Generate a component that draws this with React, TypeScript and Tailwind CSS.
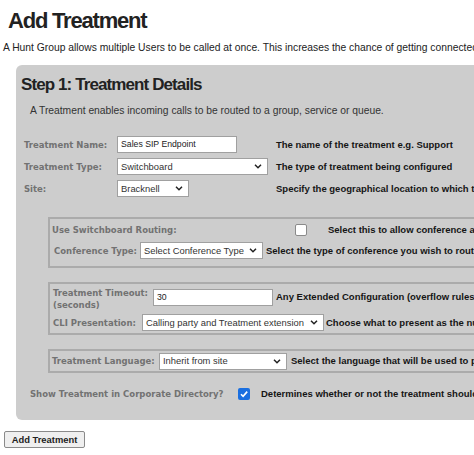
import React from "react";

const arial = { fontFamily: '"Liberation Sans", Arial, sans-serif' };
const verdana = { fontFamily: '"DejaVu Sans", Verdana, sans-serif' };

function Chevron() {
  return (
    <svg width="8" height="5" viewBox="0 0 8 5" className="shrink-0">
      <path d="M1 0.8 L4 3.8 L7 0.8" fill="none" stroke="#222" strokeWidth="1.5" />
    </svg>
  );
}

function Select({ value, w }: { value: string; w: string }) {
  return (
    <div
      className={`flex h-[17px] shrink-0 items-center justify-between overflow-hidden border border-[#a0a0a0] bg-white pl-[3px] pr-[5px] text-[9.4px] leading-none text-[#333] ${w}`}
      style={arial}
    >
      <span className="whitespace-nowrap">{value}</span>
      <Chevron />
    </div>
  );
}

function TextInput({ value, w, className = "" }: { value: string; w: string; className?: string }) {
  return (
    <div
      className={`flex h-[17px] shrink-0 items-center border border-[#a0a0a0] bg-white pl-[3px] text-[8.7px] leading-none text-[#222] ${w} ${className}`}
      style={arial}
    >
      {value}
    </div>
  );
}

function Label({ children, className = "" }: { children: React.ReactNode; className?: string }) {
  return (
    <div
      className={`shrink-0 whitespace-nowrap text-[8.5px] font-bold leading-[12px] text-[#727272] ${className}`}
      style={verdana}
    >
      {children}
    </div>
  );
}

function Desc({ children, className = "" }: { children: React.ReactNode; className?: string }) {
  return (
    <div className={`shrink-0 whitespace-nowrap text-[9.5px] font-bold leading-[12px] text-[#151515] ${className}`} style={arial}>
      {children}
    </div>
  );
}

function Box({ checked = false }: { checked?: boolean }) {
  if (checked) {
    return (
      <div className="flex h-[12px] w-[12px] shrink-0 items-center justify-center rounded-[2px] bg-[#1a6fe0]">
        <svg width="10" height="10" viewBox="0 0 10 10">
          <path d="M2 5.2 L4.1 7.3 L8.2 2.6" fill="none" stroke="#fff" strokeWidth="1.6" />
        </svg>
      </div>
    );
  }
  return <div className="h-[12px] w-[12px] shrink-0 rounded-[2px] border border-[#8a8a8a] bg-white" />;
}

export default function App() {
  return (
    <div className="h-[455px] w-[474px] overflow-hidden bg-white">
      <h1
        className="pl-[8px] pt-[9px] text-[22px] font-bold leading-[24px] tracking-[-1.2px] text-[#222]"
        style={arial}
      >
        Add Treatment
      </h1>
      <p className="mt-[8px] whitespace-nowrap pl-[3px] text-[10.3px] leading-[14px] text-[#222]" style={arial}>
        A Hunt Group allows multiple Users to be called at once. This increases the chance of getting connected to someone.
      </p>

      <div className="ml-[16px] mt-[10px] h-[355px] w-[600px] rounded-[6px] bg-[#cdcdcd] pl-[5px] pt-[10px]">
        <h2 className="text-[17px] font-bold leading-[20px] tracking-[-0.9px] text-[#222]" style={arial}>
          Step 1: Treatment Details
        </h2>
        <p className="mt-[10px] pl-[9px] text-[10.3px] leading-[12px] text-[#333]" style={arial}>
          A Treatment enables incoming calls to be routed to a group, service or queue.
        </p>

        <div className="mt-[19px] flex flex-col gap-[5px] pl-[3px]">
          <div className="flex items-center">
            <Label className="w-[93px]">Treatment Name:</Label>
            <TextInput value="Sales SIP Endpoint" w="w-[120px]" />
            <Desc className="ml-[39px]">The name of the treatment e.g. Support</Desc>
          </div>
          <div className="flex items-center">
            <Label className="w-[93px]">Treatment Type:</Label>
            <Select value="Switchboard" w="w-[151px]" />
            <Desc className="ml-[8px]">The type of treatment being configured</Desc>
          </div>
          <div className="flex items-center">
            <Label className="w-[93px]">Site:</Label>
            <Select value="Bracknell" w="w-[72px]" />
            <Desc className="ml-[87px]">Specify the geographical location to which the treatment belongs</Desc>
          </div>
        </div>

        <div className="ml-[27px] mt-[20px] flex h-[51px] flex-col gap-[6px] border-2 border-[#ababab] pl-[2px] pt-[5px]">
          <div className="flex h-[12px] items-center">
            <Label className="w-[243px]">Use Switchboard Routing:</Label>
            <Box />
            <Desc className="ml-[21px]">Select this to allow conference and switchboard routing</Desc>
          </div>
          <div className="flex items-center">
            <Label className="w-[88px] pl-[2px]">Conference Type:</Label>
            <Select value="Select Conference Type" w="w-[123px]" />
            <Desc className="ml-[3px]">Select the type of conference you wish to route to</Desc>
          </div>
        </div>

        <div className="ml-[27px] mt-[14px] flex h-[53px] flex-col gap-[3px] border-2 border-[#ababab] pl-[3px] pt-[3px]">
          <div className="flex h-[24px] items-start">
            <Label className="w-[100px]">
              Treatment Timeout:
              <br />
              (seconds)
            </Label>
            <TextInput value="30" w="w-[120px]" className="mt-[2px]" />
            <Desc className="ml-[3px] mt-[4px]">Any Extended Configuration (overflow rules) will be lost</Desc>
          </div>
          <div className="flex items-center">
            <Label className="w-[89px]">CLI Presentation:</Label>
            <Select value="Calling party and Treatment extension" w="w-[182px]" />
            <Desc className="ml-[2px]">Choose what to present as the number</Desc>
          </div>
        </div>

        <div className="ml-[27px] mt-[14px] flex h-[24px] items-center border-2 border-[#ababab] pl-[2px]">
          <Label className="w-[107px]">Treatment Language:</Label>
          <Select value="Inherit from site" w="w-[128px]" />
          <Desc className="ml-[4px]">Select the language that will be used to play prompts</Desc>
        </div>

        <div className="mt-[15px] flex items-center pl-[9px]">
          <Label className="w-[208px]">Show Treatment in Corporate Directory?</Label>
          <Box checked />
          <Desc className="ml-[11px]">Determines whether or not the treatment should appear in the directory</Desc>
        </div>
      </div>

      <button
        className="ml-[4px] mt-[11px] flex h-[17px] w-[81px] items-center justify-center rounded-[2px] border border-[#8a8a8a] bg-[#efefef] text-[9.4px] font-bold leading-none text-[#222]"
        style={arial}
      >
        Add Treatment
      </button>
    </div>
  );
}
